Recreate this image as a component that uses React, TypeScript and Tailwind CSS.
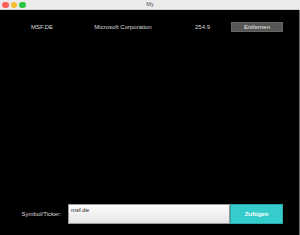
import React from "react";

export default function App() {
  return (
    <div
      className="w-[300px] h-[235px] flex flex-col overflow-hidden bg-black"
      style={{ fontFamily: '"Liberation Sans", Arial, sans-serif' }}
    >
      <div className="h-[10px] bg-[#ebebeb] relative flex items-center justify-center border-b border-[#d0d0d0]">
        <div className="absolute left-[2px] top-[1.5px] flex gap-[2px]">
          <div className="w-[6.5px] h-[6.5px] rounded-full bg-[#fe5f57]" />
          <div className="w-[6.5px] h-[6.5px] rounded-full bg-[#febc2e]" />
          <div className="w-[6.5px] h-[6.5px] rounded-full bg-[#28c840]" />
        </div>
        <span className="text-[5.5px] leading-none text-[#4a4a4a]">My</span>
      </div>
      <div className="flex-1 flex flex-col border-r border-[#6a6a6a]">
        <div className="flex items-center mt-[12px] text-[6px] text-[#dcdcdc]">
          <div className="ml-[12px] w-[60px] text-center">MSF.DE</div>
          <div className="w-[102px] text-center">Microsoft Corporation</div>
          <div className="w-[57px] text-center">254.9</div>
          <div className="w-[52px] h-[10px] bg-[#555555] border border-[#666666] flex items-center justify-center text-[#e6e6e6]">
            Entfernen
          </div>
        </div>
        <div className="mt-auto mb-[11px] flex items-center">
          <div className="w-[62px] text-right pr-[1px] text-[6px] text-[#dcdcdc]">Symbol/Ticker:</div>
          <div className="ml-[6px] w-[162px] h-[20px] bg-gradient-to-b from-white to-[#e4e4e4] border border-[#9a9a9a] pl-[2px] pt-[2px] text-[6px] text-[#222] leading-tight">
            msf.de
          </div>
          <div className="w-[53px] h-[20px] bg-[#36cccc] border border-[#2aaaaa] flex items-center justify-center text-[6px] text-white font-semibold">
            Zufügen
          </div>
        </div>
      </div>
    </div>
  );
}
